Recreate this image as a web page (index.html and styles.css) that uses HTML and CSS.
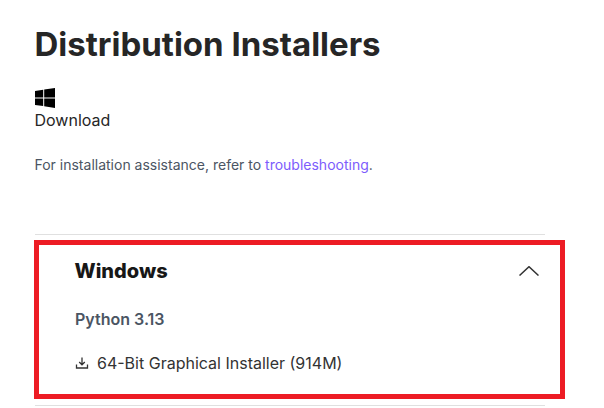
FILE: index.html
```html
<!DOCTYPE html>
<html lang="en">

<head>
    <meta charset="UTF-8">
    <meta name="viewport" content="width=device-width, initial-scale=1.0">
    <title>Distribution Installers</title>
    <link rel="stylesheet" href="styles.css">
</head>

<body>
    <div class="main">
        <h1 class="title">Distribution Installers</h1>
        <a class="os-link" href="#">
            <svg class="win-icon" viewBox="0 0 20 20" width="20" height="20" aria-hidden="true">
                <path d="M0 2.9 8.2 1.8V9.4H0ZM9.2 1.6 20 0V9.4H9.2ZM0 10.4H8.2V18.1L0 17ZM9.2 10.4H20V20L9.2 18.3Z" />
            </svg>
            <span>Download</span>
        </a>
        <p class="note">For installation assistance, refer to <a href="#">troubleshooting</a>.</p>

        <div class="accordion">
            <div class="accordion-head">
                <h2>Windows</h2>
                <svg class="chevron" viewBox="0 0 20 10" width="20" height="10" aria-hidden="true">
                    <path d="M0.5 9.5 10 0.7 19.5 9.5" />
                </svg>
            </div>
            <h3>Python 3.13</h3>
            <a class="file-link" href="#">
                <svg class="dl-icon" viewBox="0 0 14 14" width="14" height="14" aria-hidden="true">
                    <path d="M7 1.5V8.5M4.2 6 7 8.8 9.8 6M1.5 8.5V12H12.5V8.5" />
                </svg>
                <span>64-Bit Graphical Installer (914M)</span>
            </a>
            <div class="highlight"></div>
        </div>
    </div>
</body>

</html>
```

FILE: styles.css
```css
* {
    box-sizing: border-box;
    margin: 0;
    padding: 0;
}

body {
    background-color: white;
    font-family: Inter, "Liberation Sans", sans-serif;
}

.main {
    width: 546px;
    margin-left: 34.5px;
    padding-top: 22px;
}

.title {
    font-family: Inter, "Open Sans", sans-serif;
    font-size: 33px;
    line-height: 44px;
    font-weight: 700;
    color: #262626;
}

.os-link {
    display: flex;
    flex-direction: column;
    align-items: flex-start;
    margin-top: 22px;
    color: #262626;
    font-size: 16px;
    line-height: 24px;
    text-decoration: none;
}

.win-icon {
    margin-left: 0.5px;
    fill: black;
}

.note {
    margin-top: 23px;
    font-size: 14px;
    line-height: 20px;
    color: #4b5563;
}

.note a {
    color: #7c5cfc;
    text-decoration: none;
}

.accordion {
    position: relative;
    width: 510px;
    height: 172px;
    margin-top: 59px;
    margin-left: 0.5px;
    padding: 22px 6px 0 40px;
    border-top: 1px solid #e0e0e0;
    border-bottom: 1px solid #e0e0e0;
}

.accordion-head {
    display: flex;
    justify-content: space-between;
    align-items: center;
}

.accordion-head h2 {
    margin-left: -0.5px;
    font-family: Inter, "Open Sans", sans-serif;
    font-size: 20px;
    line-height: 28px;
    font-weight: 800;
    color: #171717;
}

.chevron {
    fill: none;
    stroke: #333;
    stroke-width: 1.5;
}

.accordion h3 {
    margin-top: 23px;
    font-size: 16px;
    line-height: 22px;
    font-weight: 600;
    color: #4b5563;
}

.file-link {
    display: flex;
    align-items: center;
    gap: 8px;
    margin-top: 22px;
    font-size: 16px;
    line-height: 22px;
    color: #333;
    text-decoration: none;
}

.dl-icon {
    fill: none;
    stroke: #333;
    stroke-width: 1.3;
}

/* red box drawn over the section */
.highlight {
    position: absolute;
    left: -1px;
    top: 5px;
    width: 531px;
    height: 159px;
    border: 5px solid #ed1c24;
}
```
